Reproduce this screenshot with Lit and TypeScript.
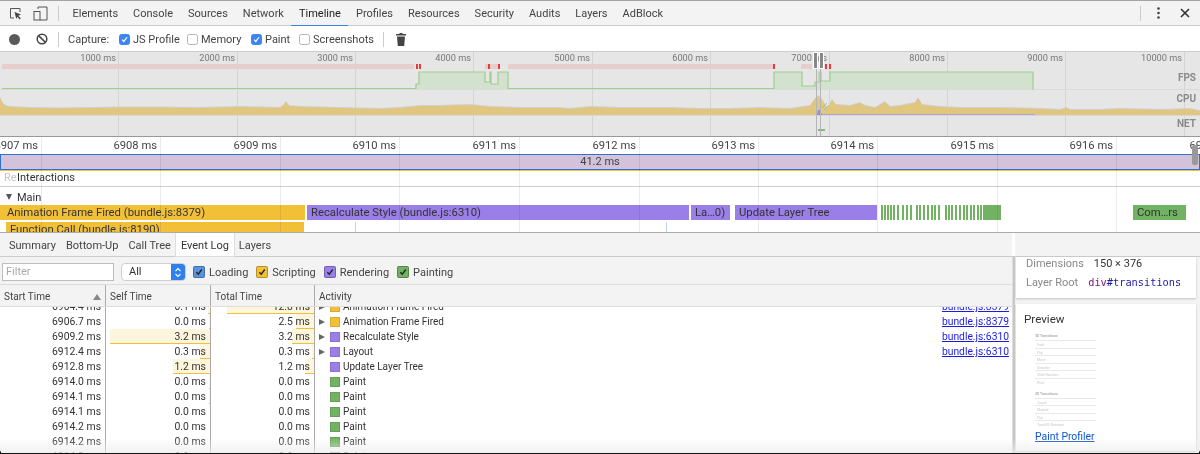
import { LitElement, html, css, svg } from "lit";
import { customElement } from "lit/decorators.js";

const CPU: [number, number][] = [[0,98],[3,104],[6,106],[10,107],[30,108],[60,108.5],[90,108],[120,107.5],[150,107.5],[200,108],[240,107],[280,108],[284,105],[286,102],[289,106],[300,107],[340,108],[380,109],[400,108],[420,106],[440,106],[470,105],[490,107],[520,108],[560,108],[570,109],[590,107],[620,108],[670,108],[700,109],[730,109],[760,108],[790,109],[810,106],[815,99],[818,96],[822,100],[827,108],[830,104],[832,100],[836,105],[850,106],[860,103],[865,106],[875,108],[880,105],[885,102],[890,107],[900,106],[915,103],[918,98],[922,105],[940,107],[960,108],[1000,108],[1040,109],[1060,110],[1066,108],[1070,110],[1100,110],[1120,109],[1165,110],[1190,109],[1200,111]];
const FPS: [number, number][] = [[2,88.5],[416,88.5],[416,84],[419,84],[419,72],[485,72],[485,82],[490,82],[490,72],[491,72],[491,84],[498,84],[498,72],[508,72],[508,88.5],[774,88.5],[774,72],[802,72],[802,86],[815,86],[815,82],[819,82],[819,72],[821,72],[821,81],[830,81],[830,72],[1033,72],[1033,89.5]];
const PINK: [number, number][] = [[2,412],[485,13],[491,6],[508,265],[801,11]];
const RED = [416, 419, 488, 498, 773, 825, 829];
const OV_GRID = [118, 237, 355, 473, 592, 710, 829, 947, 1065, 1184];
const OV_LABELS = ["1000 ms","2000 ms","3000 ms","4000 ms","5000 ms","6000 ms","7000 ms","8000 ms","9000 ms","10000 ms"];
const RULER = [41, 160, 280, 399, 519, 639, 758, 877, 997, 1116, 1236];
const TABS = ["Elements","Console","Sources","Network","Timeline","Profiles","Resources","Security","Audits","Layers","AdBlock"];
const STRIPES = [881,884,887,890,893,897,902,906,910,916,919,923,927,931,934,938,945,948,951,955,959,963,966,970,973,977,980];
const BLUE = "#aaa6d2";
const COL = { y: "#f2c037", p: "#9b7fe8", g: "#71b363" };

interface Row { start: string; self: string; selfW: number; total: string; totalW: number; name: string; color: string; arrow: boolean; link: string; }
const r = (start: string, self: string, selfW: number, total: string, totalW: number, name: string, color: string, arrow = false, link = ""): Row => ({ start, self, selfW, total, totalW, name, color, arrow, link });
const ROWS: Row[] = [
  r("6904.4 ms","0.1 ms",2,"12.8 ms",87,"Animation Frame Fired",COL.y,true,"bundle.js:8379"),
  r("6906.7 ms","0.0 ms",1,"2.5 ms",18,"Animation Frame Fired",COL.y,true,"bundle.js:8379"),
  r("6909.2 ms","3.2 ms",100,"3.2 ms",22,"Recalculate Style",COL.p,true,"bundle.js:6310"),
  r("6912.4 ms","0.3 ms",10,"0.3 ms",2,"Layout",COL.p,true,"bundle.js:6310"),
  r("6912.8 ms","1.2 ms",37,"1.2 ms",9,"Update Layer Tree",COL.p),
  r("6914.0 ms","0.0 ms",1,"0.0 ms",0,"Paint",COL.g),
  r("6914.1 ms","0.0 ms",1,"0.0 ms",0,"Paint",COL.g),
  r("6914.1 ms","0.0 ms",0,"0.0 ms",0,"Paint",COL.g),
  r("6914.2 ms","0.0 ms",0,"0.0 ms",0,"Paint",COL.g),
  r("6914.2 ms","0.0 ms",0,"0.0 ms",0,"Paint",COL.g),
  r("6914.3 ms","0.0 ms",0,"0.0 ms",0,"Paint",COL.g),
];
const THUMB: [string, string[]][] = [
  ["3D Transitions", ["Fold","Flip","Move","Dissolve","Slide Random","Pixel"]],
  ["2D Transitions", ["Touch","Module","Flip","Track3D Random"]],
];

const check = html`<svg class="tick" viewBox="0 0 12 12"><path d="M2.8 6.2 5.1 8.6 9.3 3" fill="none" stroke="currentColor" stroke-width="1.6"/></svg>`;

@customElement("app-root")
export class AppRoot extends LitElement {
  static styles = css`
    :host { display: block; position: relative; width: 1200px; height: 454px; overflow: hidden; background: #fff; font-family: Roboto, "Liberation Sans", sans-serif; font-size: 11px; color: #333; filter: blur(0.35px); }
    .tabbar { display: flex; align-items: stretch; height: 24px; background: #f3f3f3; border-top: 1px solid #a3a3a3; border-bottom: 1px solid #ccc; }
    .tabicons { display: flex; align-items: center; gap: 11px; padding-left: 9px; width: 49px; }
    .vsep { width: 1px; height: 15px; background: #ccc; align-self: center; }
    .tabs { display: flex; padding-left: 6px; }
    .tab { display: flex; align-items: center; padding: 1px 7.5px 0; color: #444; position: relative; }
    .tab.on { color: #222; }
    .tab.on::after { content: ""; position: absolute; left: 0; right: 0; bottom: -1px; height: 1px; background: #3b7ff0; }
    .tabright { margin-left: auto; display: flex; align-items: center; padding-right: 10px; gap: 16px; }
    .toolbar { display: flex; align-items: center; height: 25px; box-sizing: border-box; padding: 1px 0 0 9px; background: #fff; }
    .rec { width: 11px; height: 11px; border-radius: 50%; background: #5a5a5a; }
    .clear { margin-left: 16px; width: 12px; height: 12px; }
    .toolbar .vsep { margin: 0 9px 0 10px; }
    .cap { display: flex; align-items: center; color: #444; }
    .cb { width: 11px; height: 11px; box-sizing: border-box; border: 1px solid #b5b5b5; border-radius: 2.5px; background: #fff; margin-right: 3px; display: flex; }
    .cb.on { background: #3d86f2; border-color: #3d86f2; color: #fff; }
    .tick { width: 100%; height: 100%; display: block; }
    .overview { display: block; width: 1200px; height: 84px; background: #e6e6e6; border-top: 1px solid #ccc; }
    .overview text { font-family: Roboto, "Liberation Sans", sans-serif; font-size: 9.2px; fill: #777; }
    .overview text.side { font-weight: 700; font-size: 10px; fill: #8a8a8a; }
    .flame { position: relative; height: 95px; border-top: 1px solid #999; border-bottom: 1px solid #aaa; background: #fff; overflow: hidden; }
    .grid { position: absolute; top: 0; bottom: 0; width: 1px; background: rgba(0,0,0,.08); z-index: 2; pointer-events: none; }
    .ruler { position: relative; height: 17px; }
    .rlabel { position: absolute; top: 1px; transform: translateX(-100%); line-height: 15px; font-size: 11.2px; color: #444; white-space: nowrap; padding-right: 3px; }
    .sel { height: 16px; box-sizing: border-box; background: #d3c2da; border: 1px solid #2f6fd0; line-height: 13px; text-align: center; font-size: 11px; color: #444; }
    .yellow { height: 1px; background: #f2c037; }
    .inter { height: 16px; line-height: 14px; border-bottom: 1px solid #d0d0d0; display: flex; padding-left: 4px; color: #333; box-sizing: border-box; }
    .inter .re { width: 13px; color: #c4c4c4; overflow: hidden; }
    .mainhead { display: flex; align-items: center; height: 18px; box-sizing: border-box; padding: 2px 0 0 6px; gap: 5px; color: #333; }
    .tri-d { width: 0; height: 0; border-left: 3.5px solid transparent; border-right: 3.5px solid transparent; border-top: 6px solid #555; }
    .bars { position: relative; height: 27px; font-size: 11.3px; }
    .bar { position: absolute; height: 15px; top: 0; line-height: 16px; padding-left: 4px; box-sizing: border-box; overflow: hidden; white-space: nowrap; color: #333; }
    .bar.tall { height: 10px; top: 17px; line-height: 15px; }
    .tickmark { position: absolute; top: 17px; height: 10px; width: 1px; background: #bcd4f2; }
    .lower { display: flex; height: 221px; }
    .left { width: 1012px; display: flex; flex-direction: column; background: #f3f3f3; }
    .dtabs { display: flex; height: 24px; box-sizing: border-box; align-items: stretch; padding-left: 4px; border-bottom: 1px solid #ccc; }
    .dtab { display: flex; align-items: center; padding: 1px 5px 0; color: #444; }
    .dtab.on { background: #fff; box-shadow: 0 0 0 1px #ddd; color: #333; }
    .filter { display: flex; align-items: center; height: 28px; padding: 3px 0 0 2px; border-bottom: 1px solid #dcdcdc; box-sizing: border-box; }
    .input { width: 112px; height: 18px; box-sizing: border-box; border: 1px solid #bdbdbd; background: #fff; padding-left: 3px; line-height: 16px; color: #a9a9a9; }
    .select { margin-left: 7px; width: 65px; height: 18px; box-sizing: border-box; border: 1px solid #cfcfcf; border-radius: 4px; background: #fff; display: flex; justify-content: space-between; padding-left: 7px; line-height: 16px; overflow: hidden; color: #333; margin-right: 7px; }
    .stepper { width: 14px; background: #2f7fef; display: flex; align-items: center; justify-content: center; }
    .leg { display: flex; align-items: center; margin-right: 8px; color: #444; }
    .lcb { width: 12px; height: 12px; box-sizing: border-box; border-radius: 2px; margin-right: 4px; color: #222; border: 1px solid rgba(0,0,0,.25); }
    .table { flex: 1; background: #fff; overflow: hidden; position: relative; }
    .thead, .row { display: grid; grid-template-columns: 106px 105px 104px 1fr; }
    .thead { position: relative; z-index: 2; height: 22px; background: #f3f3f3; border-bottom: 1px solid #ddd; box-sizing: border-box; align-items: stretch; color: #444; font-size: 10px; }
    .th { display: flex; align-items: center; justify-content: space-between; padding: 2px 4px 0 4px; border-right: 1px solid #aaa; }
    .th:last-child { border: 0; }
    .up { width: 0; height: 0; border-left: 4px solid transparent; border-right: 4px solid transparent; border-bottom: 6px solid #888; }
    .rows { margin-top: -8px; font-size: 10.4px; }
    .row { height: 15px; line-height: 15px; color: #333; }
    .num { position: relative; text-align: right; padding-right: 4px; border-right: 1px solid #aaa; }
    .num span { position: relative; }
    .cost { position: absolute; right: 0; top: 0; bottom: 0; box-sizing: border-box; background: #fdf5dc; border-bottom: 1px solid #f2c037; }
    .act { display: flex; align-items: center; padding-left: 4px; font-size: 10px; }
    .tri-r { width: 0; height: 0; border-top: 3.5px solid transparent; border-bottom: 3.5px solid transparent; border-left: 6px solid #666; }
    .arrowbox { width: 10px; flex: none; }
    .sq { width: 10px; height: 10px; box-sizing: border-box; margin: 0 3px 0 1px; flex: none; border: 1px solid rgba(0,0,0,.1); }
    .link { margin-left: auto; margin-right: 3px; font-size: 10.3px; color: #1a1ae6; text-decoration: underline; }
    .divider { width: 3px; margin-top: 24px; background: #c8c8c8; border-left: 1px solid #ddd; box-sizing: border-box; }
    .sidewrap { flex: 1; display: flex; flex-direction: column; background: #f3f3f3; }
    .sidehead { height: 23px; border-bottom: 1px solid #ccc; margin-left: -3px; }
    .side { flex: 1; padding: 0 4px 0 1px; display: flex; flex-direction: column; gap: 6px; }
    .card { background: #fff; box-shadow: 0 1px 2px rgba(0,0,0,.2); }
    .info { height: 41px; box-sizing: border-box; padding: 0 0 0 10px; display: flex; flex-direction: column; line-height: 13px; color: #888; gap: 6px; font-size: 11px; }
    .info div { display: flex; gap: 10px; align-items: baseline; }
    .info b { font-weight: 400; color: #333; }
    .code { font-family: "DejaVu Sans Mono", monospace; font-size: 10.3px; color: #1a1aa6; }
    .code i { font-style: normal; color: #881280; }
    .preview { height: 147px; padding: 8px 0 0 8px; box-sizing: border-box; font-size: 11.6px; color: #333; }
    .ptitle { line-height: 15px; }
    .thumb { margin: 7px 0 6px 11px; width: 61px; height: 90px; font-size: 3.5px; color: #c8c8c8; }
    .thumb b { display: block; font-weight: 700; color: #b0b0b0; height: 6px; line-height: 5px; }
    .thumb .sec + .sec { margin-top: 6px; }
    .thumb span { display: block; height: 7.6px; line-height: 9px; border-top: 1px solid #e8e8e8; box-sizing: border-box; padding-left: 2px; }
    .profiler { margin-left: 11px; color: #1155cc; text-decoration: underline; font-size: 10.4px; line-height: 14px; }
    .fade { position: absolute; left: 0; right: 0; bottom: 0; height: 16px; background: linear-gradient(rgba(235,235,235,0), rgba(235,235,235,.75)); pointer-events: none; z-index: 3; }
    .edge { position: absolute; left: 0; right: 0; bottom: 0; height: 1px; background: #111; z-index: 4; }
    .corner { position: absolute; bottom: 0; width: 4px; height: 4px; z-index: 4; }
    .corner.l { left: 0; background: radial-gradient(circle at 100% 0, transparent 3.5px, #111 4px); }
    .corner.r { right: 0; background: radial-gradient(circle at 0 0, transparent 3.5px, #111 4px); }
    .handle { position: absolute; left: 1192px; top: 8px; width: 6px; height: 20px; background: #999; border-radius: 2px; z-index: 3; }
  `;

  private overview() {
    const H = (y: number) => y - 52;
    const area = `M2 ${H(89.5)} ` + FPS.map(([x, y]) => `L${x} ${H(y)}`).join(" ") + ` L1033 ${H(89.5)} Z`;
    const line = `M` + FPS.map(([x, y]) => `${x} ${H(y)}`).join(" L");
    const cpu = `M0 ${H(115)} ` + CPU.map(([x, y]) => `L${x} ${H(y)}`).join(" ") + ` L1200 ${H(115)} Z`;
    const cpuTop = `M0 ${H(114)} ` + CPU.map(([x, y]) => `L${x} ${H(y - 1)}`).join(" ") + ` L1200 ${H(114)} Z`;
    return html`<svg class="overview" viewBox="0 0 1200 84">
      ${OV_GRID.map((x) => svg`<rect x=${x} y="0" width="1" height="84" fill="#d4d4d4"/>`)}
      <rect x="0" y=${H(89)} width="1200" height="1" fill="#dadada"/>
      <rect x="0" y=${H(115)} width="1200" height="1" fill="#d8d8d8"/>
      ${OV_LABELS.map((t, i) => svg`<text x=${OV_GRID[i] - 2} y="9" text-anchor="end">${t}</text>`)}
      ${PINK.map(([x, w]) => svg`<rect x=${x} y=${H(64)} width=${w} height="5" fill="#e8cdcd"/>`)}
      ${RED.map((x) => svg`<rect x=${x} y=${H(64)} width="2" height="5" fill="#ea3a3a"/>`)}
      <path d=${area} fill="#d3e1cf"/>
      <path d=${line} fill="none" stroke="#9fce90" stroke-width="1.2"/>
      <path d=${cpuTop} fill="#cfcfcf"/>
      <path d=${cpu} fill="#e1c67f"/>
      <rect x="820" y=${H(114)} width="215" height="1" fill="${BLUE}"/>
      <path d="M817 ${H(115)} L818 ${H(110)} L820 ${H(110)} L822 ${H(115)} Z" fill="#9b86e0"/>
      <path d="M822 ${H(108)} L827 ${H(103)} M824 ${H(110)} L829 ${H(105)}" stroke="#a6c690" stroke-width="1" fill="none"/>
      <rect x="818" y=${H(129)} width="7" height="2" fill="#86b878"/>
      <rect x="816" y="0" width="1" height="84" fill="#b5b5b5"/>
      <rect x="820" y="0" width="1" height="84" fill="#b5b5b5"/>
      <rect x="813" y="0" width="5" height="17" fill="#fff"/>
      <rect x="814" y="1" width="3" height="15" fill="#888"/>
      <rect x="819" y="0" width="5" height="17" fill="#fff"/>
      <rect x="820" y="1" width="3" height="15" fill="#888"/>
      <text class="side" x="1196" y="29" text-anchor="end">FPS</text>
      <text class="side" x="1196" y="50" text-anchor="end">CPU</text>
      <text class="side" x="1196" y="75" text-anchor="end">NET</text>
    </svg>`;
  }

  render() {
    return html`
      <div class="tabbar">
        <div class="tabicons">
          <svg width="13" height="13" viewBox="0 0 13 13"><path d="M5 11H1.5V1.5H11V5" fill="none" stroke="#555" stroke-width="1"/><path d="M5.5 5 12 7.6 9.3 8.8 11.8 11.4 10.8 12.4 8.3 9.8 7.3 12Z" fill="#444"/></svg>
          <svg width="15" height="15" viewBox="0 0 15 15"><path d="M5 3V1h9v13H7" fill="none" stroke="#555" stroke-width="1"/><rect x="1" y="5.5" width="6" height="8.5" fill="none" stroke="#555" stroke-width="1"/></svg>
        </div>
        <div class="vsep"></div>
        <div class="tabs">${TABS.map((t) => html`<div class="tab ${t === "Timeline" ? "on" : ""}">${t}</div>`)}</div>
        <div class="tabright">
          <div class="vsep"></div>
          <svg width="3" height="12" viewBox="0 0 3 12"><circle cx="1.5" cy="1.5" r="1.3" fill="#444"/><circle cx="1.5" cy="6" r="1.3" fill="#444"/><circle cx="1.5" cy="10.5" r="1.3" fill="#444"/></svg>
          <svg style="margin-left:4px" width="10" height="10" viewBox="0 0 10 10"><path d="M1 1 9 9M9 1 1 9" stroke="#333" stroke-width="1.6"/></svg>
        </div>
      </div>
      <div class="toolbar">
        <div class="rec"></div>
        <svg class="clear" viewBox="0 0 12 12"><circle cx="6" cy="6" r="4.8" fill="none" stroke="#444" stroke-width="1.5"/><path d="M2.6 2.6 9.4 9.4" stroke="#444" stroke-width="1.5"/></svg>
        <div class="vsep"></div>
        <span class="cap" style="width:51px">Capture:</span>
        ${[["JS Profile", true, 68], ["Memory", false, 64], ["Paint", true, 48], ["Screenshots", false, 84]].map(([t, on, w]) => html`<span class="cap" style="width:${w}px"><span class="cb ${on ? "on" : ""}">${on ? check : ""}</span>${t}</span>`)}
        <div class="vsep" style="margin:0"></div>
        <svg style="margin-left:12px" width="10" height="13" viewBox="0 0 10 13"><path d="M3.5 0h3v1H10v1.5H0V1h3.5ZM1 3.5h8L8.2 13H1.8Z" fill="#444"/></svg>
      </div>
      ${this.overview()}
      <div class="flame">
        ${RULER.map((x) => html`<div class="grid" style="left:${x}px"></div>`)}
        <div class="handle"></div>
        <div class="ruler">${RULER.map((x, i) => html`<span class="rlabel" style="left:${x}px">${6907 + i} ms</span>`)}</div>
        <div class="sel">41.2 ms</div>
        <div class="yellow"></div>
        <div class="inter"><span class="re">Re</span><span>Interactions</span></div>
        <div class="mainhead"><span class="tri-d"></span>Main</div>
        <div class="bars">
          <div class="bar" style="left:0;width:305px;background:${COL.y};padding-left:7px">Animation Frame Fired (bundle.js:8379)</div>
          <div class="bar" style="left:307px;width:382px;background:${COL.p}">Recalculate Style (bundle.js:6310)</div>
          <div class="bar" style="left:691px;width:39px;background:${COL.p}">La…0)</div>
          <div class="bar" style="left:735px;width:142px;background:${COL.p}">Update Layer Tree</div>
          ${STRIPES.map((x) => html`<div class="bar" style="left:${x}px;width:2px;padding:0;background:${COL.g}"></div>`)}
          <div class="bar" style="left:983px;width:18px;background:${COL.g}"></div>
          <div class="bar" style="left:1133px;width:53px;background:${COL.g}">Com…rs</div>
          <div class="bar tall" style="left:6px;width:298px;background:${COL.y}">Function Call (bundle.js:8190)</div>
          <div class="tickmark" style="left:355px"></div>
          <div class="tickmark" style="left:666px"></div>
        </div>
      </div>
      <div class="lower">
        <div class="left">
          <div class="dtabs">
            ${["Summary","Bottom-Up","Call Tree","Event Log","Layers"].map((t) => html`<div class="dtab ${t === "Event Log" ? "on" : ""}">${t}</div>`)}
          </div>
          <div class="filter">
            <div class="input">Filter</div>
            <div class="select">All<span class="stepper"><svg width="6" height="11" viewBox="0 0 6 11"><path d="M.5 4 3 1.5 5.5 4M.5 7 3 9.5 5.5 7" fill="none" stroke="#fff" stroke-width="1.1"/></svg></span></div>
            ${[["Loading","#5a92dc"],["Scripting",COL.y],["Rendering",COL.p],["Painting",COL.g]].map(([t, c]) => html`<span class="leg"><span class="lcb" style="background:${c}">${check}</span>${t}</span>`)}
          </div>
          <div class="table">
            <div class="thead">
              <div class="th">Start Time<span class="up"></span></div>
              <div class="th">Self Time</div>
              <div class="th">Total Time</div>
              <div class="th">Activity</div>
            </div>
            <div class="rows">
              ${ROWS.map((x) => html`<div class="row">
                <div class="num"><span>${x.start}</span></div>
                <div class="num">${x.selfW ? html`<div class="cost" style="width:${x.selfW}px"></div>` : ""}<span>${x.self}</span></div>
                <div class="num">${x.totalW ? html`<div class="cost" style="width:${x.totalW}px"></div>` : ""}<span>${x.total}</span></div>
                <div class="act"><span class="arrowbox">${x.arrow ? html`<div class="tri-r"></div>` : ""}</span><span class="sq" style="background:${x.color}"></span>${x.name}${x.link ? html`<span class="link">${x.link}</span>` : ""}</div>
              </div>`)}
            </div>
          </div>
        </div>
        <div class="divider"></div>
        <div class="sidewrap">
          <div class="sidehead"></div>
          <div class="side">
            <div class="card info">
              <div><span>Dimensions</span><b>150 × 376</b></div>
              <div><span>Layer Root</span><span class="code"><i>div</i>#transitions</span></div>
            </div>
            <div class="card preview">
              <div class="ptitle">Preview</div>
              <div class="thumb">${THUMB.map(([h, items]) => html`<div class="sec"><b>${h}</b>${items.map((i) => html`<span>${i}</span>`)}</div>`)}</div>
              <div class="profiler">Paint Profiler</div>
            </div>
          </div>
        </div>
      </div>
      <div class="fade"></div>
      <div class="edge"></div>
      <div class="corner l"></div>
      <div class="corner r"></div>
    `;
  }
}
